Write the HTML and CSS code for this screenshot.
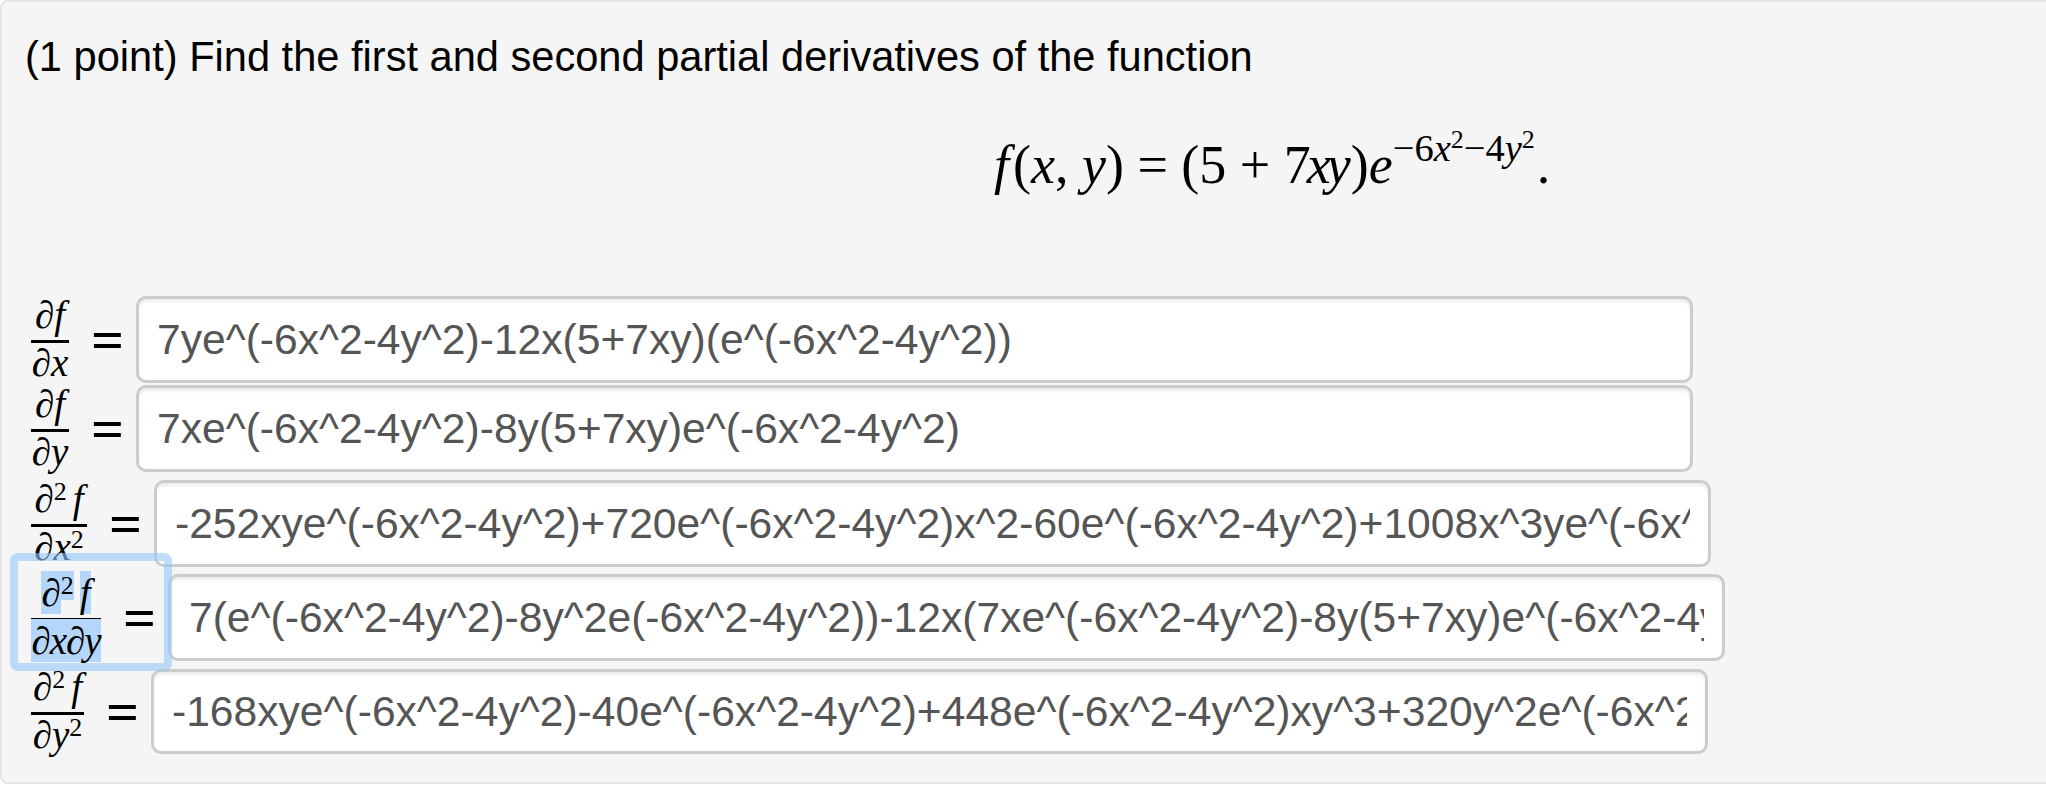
FILE: index.html
```html
<!DOCTYPE html>
<html lang="en">
<head>
    <meta charset="UTF-8">
    <title>Partial derivatives</title>
    <link rel="stylesheet" href="styles.css">
</head>
<body>
    <div class="problem">
        <p class="statement">(1 point) Find the first and second partial derivatives of the function</p>

        <div class="equation">
            <i class="fn">f</i>(<i>x</i>, <i>y</i>) = (5 + <span class="tight">7<i>x</i></span><i>y</i>)<i>e</i><span class="exp">−6<i>x</i><span class="exp2">2</span>−4<i>y</i><span class="exp2">2</span></span><span class="dot">.</span>
        </div>

        <form class="answers">
            <div class="row row-fx">
                <div class="frac frac-1"><span class="num">∂<i>f</i></span><span class="den">∂<i>x</i></span></div>
                <span class="eq">=</span>
                <input type="text" value="7ye^(-6x^2-4y^2)-12x(5+7xy)(e^(-6x^2-4y^2))">
            </div>
            <div class="row row-fy">
                <div class="frac frac-1"><span class="num">∂<i>f</i></span><span class="den">∂<i>y</i></span></div>
                <span class="eq">=</span>
                <input type="text" value="7xe^(-6x^2-4y^2)-8y(5+7xy)e^(-6x^2-4y^2)">
            </div>
            <div class="row row-fxx">
                <div class="frac frac-2"><span class="num">∂<sup>2</sup><i>f</i></span><span class="den">∂<i>x</i><sup>2</sup></span></div>
                <span class="eq">=</span>
                <input type="text" value="-252xye^(-6x^2-4y^2)+720e^(-6x^2-4y^2)x^2-60e^(-6x^2-4y^2)+1008x^3ye^(-6x^2-4y^2)">
            </div>
            <div class="row row-fxy">
                <div class="focus-ring"></div>
                <div class="frac frac-3"><span class="num"><span class="sel">∂</span><sup class="sel">2</sup><i class="sel">f</i></span><span class="den"><span class="sel den-tight">∂<i>x</i>∂<i>y</i></span></span></div>
                <span class="eq">=</span>
                <input type="text" value="7(e^(-6x^2-4y^2)-8y^2e(-6x^2-4y^2))-12x(7xe^(-6x^2-4y^2)-8y(5+7xy)e^(-6x^2-4y^2))">
            </div>
            <div class="row row-fyy">
                <div class="frac frac-4"><span class="num">∂<sup>2</sup><i>f</i></span><span class="den">∂<i>y</i><sup>2</sup></span></div>
                <span class="eq">=</span>
                <input type="text" value="-168xye^(-6x^2-4y^2)-40e^(-6x^2-4y^2)+448e^(-6x^2-4y^2)xy^3+320y^2e^(-6x^2-4y^2)">
            </div>
        </form>
    </div>
</body>
</html>
```

FILE: styles.css
```css
* {
    box-sizing: border-box;
}

html,
body {
    margin: 0;
    height: 100%;
    overflow: hidden;
    background-color: #fff;
}

.problem {
    height: 784px;
    margin-right: -10px;
    padding: 0 0 0 29px;
    background-color: #f5f5f5;
    border: 2px solid #e3e3e3;
    border-radius: 8px;
    font-family: "Liberation Sans", Arial, sans-serif;
    color: #000;
}

.statement {
    margin: 33px 0 0 -6px;
    font-size: 41.6px;
    line-height: 44px;
}

.equation {
    margin: 53px 0 0 963px;
    height: 66px;
    font-family: "Liberation Serif", "Times New Roman", serif;
    font-size: 54px;
    line-height: 66px;
    white-space: nowrap;
}

.fn {
    margin-right: 4px;
}

.tight {
    letter-spacing: -4px;
}

.exp {
    position: relative;
    top: -22px;
    font-size: 38.5px;
}

.exp2 {
    position: relative;
    top: -13px;
    font-size: 26px;
}

.dot {
    margin-left: 2px;
}

.answers {
    margin-top: 98px;
}

.row {
    position: relative;
    display: flex;
    align-items: center;
    height: 87px;
}

.row-fy {
    margin-top: 2px;
}

.row-fxx {
    margin-top: 8px;
}

.row-fxy {
    margin-top: 7px;
}

.row-fyy {
    height: 85px;
    margin-top: 8px;
}

.frac {
    display: flex;
    flex-direction: column;
    align-items: center;
    flex: none;
    font-family: "Liberation Serif", "Times New Roman", serif;
    font-size: 39px;
    line-height: 40px;
}

.frac-1 {
    width: 38px;
}

.frac-2 {
    width: 56px;
}

.frac-3 {
    width: 70px;
}

.frac-4 {
    width: 53px;
}

.num,
.den {
    display: block;
    height: 42px;
    white-space: nowrap;
}

.num {
    line-height: 34px;
}

.num sup {
    margin-right: 6px;
}

.den {
    width: 100%;
    text-align: center;
    border-top: 3px solid #000;
}

.den-tight {
    letter-spacing: -1px;
}

.frac sup {
    font-size: 26px;
    line-height: 0;
    vertical-align: 12px;
}

.sel {
    background-color: #b5d6fb;
}

.eq {
    flex: none;
    width: 30px;
    margin: 0 15px 0 22px;
    font-family: "Liberation Serif", "Times New Roman", serif;
    font-size: 58px;
    font-weight: bold;
    line-height: 50px;
    text-align: center;
}

input[type="text"] {
    flex: none;
    width: 1557px;
    height: 100%;
    padding: 0 18px;
    border: 3px solid #ccc;
    border-radius: 10px;
    background-color: #fff;
    box-shadow: inset 0 3px 3px rgba(0, 0, 0, 0.075);
    font-family: "Liberation Sans", Arial, sans-serif;
    font-size: 42.6px;
    color: #555;
}

.focus-ring {
    position: absolute;
    left: -21px;
    top: -21px;
    width: 162px;
    height: 118px;
    border: 8px solid rgba(148, 200, 250, 0.6);
    border-radius: 8px;
    pointer-events: none;
    z-index: 1;
}
```
